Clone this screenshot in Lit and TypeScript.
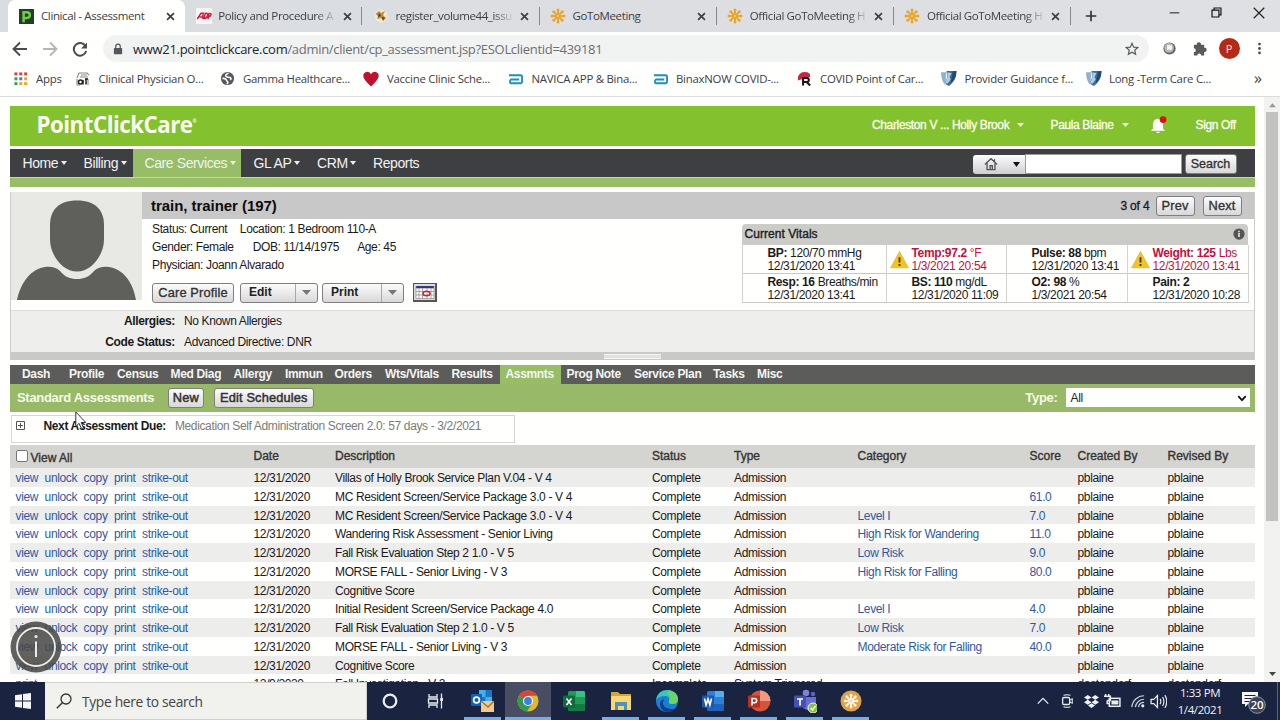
import { LitElement, html, svg, css, nothing } from "lit";
import { customElement } from "lit/decorators.js";

const burst = (fill: string, hub: string) => svg`
  <g stroke=${fill} stroke-width="1.900" fill=${fill}>
    ${[0, 45, 90, 135, 180, 225, 270, 315].map(
      (a) => svg`<g transform="rotate(${a} 8 8)"><path d="M8 8V2.6"/><circle cx="8" cy="2" r="1.500" stroke="none"/></g>`,
    )}
    <circle cx="8" cy="8" r="2.400" stroke="none"/><circle cx="8" cy="8" r=".8" fill=${hub} stroke="none"/>
  </g>`;

const icon = (body: unknown, w = 16, h = w, box = "0 0 16 16") =>
  html`<svg width=${w} height=${h} viewBox=${box} fill="none">${body}</svg>`;

const pcc = icon(svg`<rect width="16" height="16" fill="#263a30"/><path d="M4.9 14V3.4h3.6a3 3 0 0 1 0 6.1H5" stroke="#6bd13a" stroke-width="2.7"/>`, 15);
const adp = icon(svg`<rect width="16" height="16" rx="1" fill="#f8f4f5"/><path d="M1.300 11 5 5.200h2.200l-.6 5.600M3.600 9h3M8 10.800l1.300-5.600h1.200q1.500.3.900 2.800T8 10.600M12 11l1-5.600q2.400-.2 2 1.500t-2.500 1.600" stroke="#c8203c" stroke-width="1.500"/>`, 16);
const seal = icon(svg`<circle cx="8" cy="8" r="6.500" fill="#f4e8c8"/><path d="M2.500 6 6 3l2 2 4-2-2 4 3 3-3 3-2-3-4 1 1-3z" fill="#b98a45"/><path d="m6 5 2 3-3 1zM9 9l3 1-2 2z" fill="#4b3a28"/>`, 16);
const goto = icon(burst("#e7a52b", "#fff1cf"), 16);
const abbott = icon(svg`<path d="M1 4h12.500q1.500 0 1.500 1.500v5.500q0 1.500-1.500 1.500h-10Q2 12.500 2 10.800T3.500 8.500H12" stroke="#1f8fb4" stroke-width="2"/>`, 15, 16);
const shield = icon(svg`<path d="M1 2h5l-1 12Q1 10 1 2z" fill="#8fb0cf"/><path d="M6 1h9.500q0 9-7 14-3.500-1-3.500-4 3-4 1-10z" fill="#3f6f9f"/><path d="m7 2 4 1-2 3 1 3-3 4-2-1 2-5z" fill="#b4cce0"/><path d="m12 1.500 3.500-.5q0 4-1.500 7l-4 5 1-6z" fill="#234a72"/>`, 17);
const raven = icon(svg`<path d="M1 6q2-5 7-5 7 0 6 5l-4 2-6 1-3 1z" fill="#c22945"/><path d="M6.500 15.500V7.500h4a2 2 0 0 1 0 4.200H7M10 11.500l4 4" stroke="#1b1718" stroke-width="2.200"/>`, 15);
const heart = icon(svg`<path d="M8 15.500Q.3 8.500.3 5A4 4 0 0 1 8 3.300 4 4 0 0 1 15.700 5Q15.700 8.500 8 15.500z" fill="#bf1230"/>`, 16);
const globe = icon(svg`<circle cx="8" cy="8" r="7" fill="#55585c"/><path d="M9 2.300Q5 4 6.300 5.500T11 7q1.500 1 0 2.500M2.500 8q3-.5 4 1.200T8.500 12l-1 2" stroke="#fff" stroke-width="1.700"/>`, 15);
const doc = icon(svg`<path d="M2 7 4 2h8l2 2M6 4h6M5 6h8M2 8v6h3M13 8v6" stroke="#8a8d90" stroke-width="1.100"/><circle cx="5.500" cy="11" r="2" stroke="#222" stroke-width="1.600"/><path d="M8 9v4.500M11 8.500v5M10 8h3" stroke="#222" stroke-width="1.500"/>`, 16);
const apps = icon(
  [0, 1, 2].flatMap((r) => [0, 1, 2].map((c) => svg`<rect x=${1.5 + c * 5.2} y=${1.5 + r * 5.2} width="3.200" height="3.200" fill=${["#d8433b", "#d8433b", "#d8433b", "#3f9a55", "#3b7fd6", "#e6a52c", "#3f9a55", "#e6a52c", "#e6a52c"][r * 3 + c]}/>`)),
  15,
);
const cross = icon(svg`<path d="m3 3 10 10M13 3 3 13" stroke="#3c4043" stroke-width="2.500"/>`, 11);
const caret = (c: string, w = 7, h = 4) => html`<svg width=${w} height=${h} viewBox="0 0 8 5" preserveAspectRatio="none"><path d="M0 0h8L4 5z" fill=${c}/></svg>`;
const warn = icon(svg`<path d="M8 1.200 15.500 15H.5z" fill="#f3c41f" stroke="#e0b23a" stroke-width=".6" stroke-linejoin="round"/><path d="M8 6v4.500M8 11.800v1.600" stroke="#3a3420" stroke-width="1.500"/>`, 21, 19);

const TABS: [unknown, string][] = [
  [pcc, "Clinical - Assessment"],
  [adp, "Policy and Procedure A"],
  [seal, "register_volume44_issu"],
  [goto, "GoToMeeting"],
  [goto, "Official GoToMeeting H"],
  [goto, "Official GoToMeeting H"],
];

const BOOKMARKS: [unknown, string][] = [
  [apps, "Apps"],
  [doc, "Clinical Physician O..."],
  [globe, "Gamma Healthcare..."],
  [heart, "Vaccine Clinic Sche..."],
  [abbott, "NAVICA APP & Bina..."],
  [abbott, "BinaxNOW COVID-..."],
  [raven, "COVID Point of Car..."],
  [shield, "Provider Guidance f..."],
  [shield, "Long -Term Care C..."],
];

const font = css`
  * { box-sizing: border-box; }
  svg { display: block; flex: none; }
`;

@customElement("browser-chrome")
class BrowserChrome extends LitElement {
  static styles = [font, css`
    :host { display: block; height: 97px; background: #fffffd; color: #3d4043; font-family: "Open Sans", sans-serif; white-space: nowrap; }
    .tabs { display: flex; height: 32px; background: linear-gradient(90deg, #d9dce0, #dfe0e4); padding-left: 8px; align-items: stretch; }
    .tab { width: 177.200px; padding-left: 11px; display: flex; align-items: center; }
    .tab.active { background: #fffffd; border-radius: 7px 7px 0 0; }
    .label { width: 117px; margin: 0 6.500px 0 7px; font-size: 11.500px; letter-spacing: -.38px; line-height: 18px; }
    .fade { -webkit-mask-image: linear-gradient(90deg, #000 84%, rgba(0, 0, 0, .1)); mask-image: linear-gradient(90deg, #000 84%, rgba(0, 0, 0, .1)); }
    .fav { width: 15px; display: flex; justify-content: center; }
    .rule { width: 1px; height: 18px; background: #85888c; margin-left: auto; }
    .plus { margin: 10px 0 0 14px; }
    .win { display: flex; margin-left: auto; gap: 31px; padding: 7px 15px 0 0; }
    .bar { display: flex; height: 33px; align-items: center; padding-left: 12px; }
    .nav { display: flex; gap: 14px; margin-right: 15px; }
    .omni { display: flex; align-items: center; height: 27px; width: 1046px; border-radius: 14px; background: #f1f2f2; padding-left: 9px; font-size: 13px; color: #6c6f73; }
    .omni b { font-weight: 400; color: #222427; }
    .url { margin-left: 9px; letter-spacing: -.3px; }
    .star { margin: 0 10px 0 auto; }
    .tools { display: flex; align-items: center; margin-left: 13.500px; }
    .puz { margin-left: 16px; }
    .me { width: 21px; height: 21px; border-radius: 50%; background: #b32a17; color: #ffe8df; font: 11px/21px "Open Sans", sans-serif; text-align: center; margin: 0 13px 0 12px; }
    .marks { display: grid; grid-template-columns: 62.500px 144.500px 144px 144.500px 144.500px 144px 144.500px 144.500px 145px 1fr; height: 27px; padding-left: 12px; align-items: center; font-size: 11.400px; letter-spacing: -.25px; }
    .mark { display: flex; align-items: center; gap: 8px; }
    .mark .fav { width: 16px; }
    .more { font-size: 16px; padding-left: 24px; line-height: 18px; margin-top: -2px; }
    .edge { height: 1px; background: #dcdcdc; margin-top: 4px; }
  `];
  render() {
    return html`
      <div class="tabs">
        ${TABS.map(([i, t], n) => html`<div class="tab ${n ? "" : "active"}">
          <span class="fav">${i}</span><span class="label ${n && n !== 3 ? "fade" : ""}">${t}</span>${cross}
          ${n ? html`<i class="rule"></i>` : nothing}</div>`)}
        <span class="plus">${icon(svg`<path d="M8 1v14M1 8h14" stroke="#333" stroke-width="2.200"/>`, 12)}</span>
        <div class="win">
          ${icon(svg`<path d="M1 8.500h14" stroke="#222" stroke-width="1.500"/>`, 11)}
          ${icon(svg`<path d="M1.500 4.500h10v10h-10zM4.500 4.500v-3h10v10h-3" stroke="#111" stroke-width="1.700"/>`, 11)}
          ${icon(svg`<path d="m1 1 14 14M15 1 1 15" stroke="#222" stroke-width="1.600"/>`, 12)}
        </div>
      </div>
      <div class="bar">
        <div class="nav">
          ${icon(svg`<path d="M15 8H2M8 1.500 1.500 8 8 14.500" stroke="#4a4d50" stroke-width="1.900"/>`, 16)}
          ${icon(svg`<path d="M1 8h13M8 1.500 14.500 8 8 14.500" stroke="#b4b5b7" stroke-width="1.900"/>`, 16)}
          ${icon(svg`<path d="M13.500 5A6.300 6.300 0 1 0 14.200 10" stroke="#4a4d50" stroke-width="2"/><path d="M15 1.500v6H9z" fill="#4a4d50"/>`, 16)}
        </div>
        <div class="omni">
          ${icon(svg`<rect x="2.500" y="6.500" width="11" height="8.500" rx="1" fill="#54575a"/><path d="M5 7V4.500a3 3 0 0 1 6 0V7" stroke="#54575a" stroke-width="1.600"/>`, 12)}
          <span class="url"><b>www21.pointclickcare.com</b>/admin/client/cp_assessment.jsp?ESOLclientid=439181</span>
          <span class="star">${icon(svg`<path d="m8 1.500 1.900 4.400 4.800.4-3.600 3.100 1.100 4.700L8 11.600l-4.200 2.500 1.100-4.700L1.300 6.300l4.800-.4z" stroke="#55585b" stroke-width="1.300"/>`, 14)}</span>
        </div>
        <div class="tools">
          ${icon(svg`<circle cx="8" cy="8" r="7.500" fill="#5c5e60"/><circle cx="7.500" cy="7.300" r="6" fill="#b6b9bb"/><path d="M5 4h6v5.500H5z" fill="#f6f6f6"/>`, 13)}
          <svg class="puz" width="15" height="15" viewBox="0 0 16 16"><path d="M2 4h3.200a2.200 2.200 0 1 1 4.300 0H13v3.300a2.200 2.200 0 1 1 0 4.300V15.500H9.800a2 2 0 1 0-4.200 0H2V12a2 2 0 1 0 0-4.200z" fill="#585b5e"/></svg>
          <div class="me">P</div>
          ${icon(svg`<g fill="#4a4d50"><circle cx="8" cy="2.500" r="1.700"/><circle cx="8" cy="8" r="1.700"/><circle cx="8" cy="13.500" r="1.700"/></g>`, 13)}
        </div>
      </div>
      <div class="marks">
        ${BOOKMARKS.map(([i, t]) => html`<div class="mark"><span class="fav">${i}</span>${t}</div>`)}
        <span class="more">»</span>
      </div>
      <div class="edge"></div>`;
  }
}

const ROWS: [string, string, string][] = [
  ["Villas of Holly Brook Service Plan V.04 - V 4", "", ""],
  ["MC Resident Screen/Service Package 3.0 - V 4", "", "61.0"],
  ["MC Resident Screen/Service Package 3.0 - V 4", "Level I", "7.0"],
  ["Wandering Risk Assessment - Senior Living", "High Risk for Wandering", "11.0"],
  ["Fall Risk Evaluation Step 2 1.0 - V 5", "Low Risk", "9.0"],
  ["MORSE FALL - Senior Living - V 3", "High Risk for Falling", "80.0"],
  ["Cognitive Score", "", ""],
  ["Initial Resident Screen/Service Package 4.0", "Level I", "4.0"],
  ["Fall Risk Evaluation Step 2 1.0 - V 5", "Low Risk", "7.0"],
  ["MORSE FALL - Senior Living - V 3", "Moderate Risk for Falling", "40.0"],
  ["Cognitive Score", "", ""],
];

const VITALS: [string, string, string, string, boolean][] = [
  ["BP:", "", " 120/70 mmHg", "12/31/2020 13:41", false],
  ["Temp:", "97.2", " °F", "1/3/2021 20:54", true],
  ["Pulse: ", "88", " bpm", "12/31/2020 13:41", false],
  ["Weight: ", "125", " Lbs", "12/31/2020 13:41", true],
  ["Resp: ", "16", " Breaths/min", "12/31/2020 13:41", false],
  ["BS: ", "110", " mg/dL", "12/31/2020 11:09", false],
  ["O2: ", "98", " %", "1/3/2021 20:54", false],
  ["Pain: ", "2", "", "12/31/2020 10:28", false],
];

@customElement("clinical-page")
class ClinicalPage extends LitElement {
  static styles = [font, css`
    :host { display: flex; height: 585px; overflow: hidden; background: #fffffd; color: #1a1a1a; font: 12px "Liberation Sans", Arial, sans-serif; letter-spacing: -.36px; white-space: nowrap; position: relative; }
    .page { width: 1245px; margin: 9px 9.500px 0 9.500px; flex: none; }
    .brand { height: 40px; background: #84c12f; display: grid; grid-template-columns: 27px 835.500px 178.500px 98px 47px 1fr; align-items: center; color: #fbfff0; padding-bottom: 3px; -webkit-text-stroke: .3px; }
    .logo { font: 700 22.300px/30px "Open Sans", sans-serif; letter-spacing: -.5px; -webkit-text-stroke: 0; }
    .logo sup { font-size: 5px; line-height: 0; vertical-align: 10px; letter-spacing: 0; }
    .who { display: flex; align-items: center; gap: 8px; }
    .menu { margin-top: 3px; height: 28px; background: #3e3f42; display: flex; color: #f2f2f0; font-size: 14px; }
    .menus { display: grid; grid-template-columns: 61px 62px 108px 76.500px 56px 90px; line-height: 28px; letter-spacing: -.4px; }
    .menus span { display: flex; align-items: center; gap: 2.500px; }
    .menus .m { padding-left: 13px; }
    .menus .on { background: #97be67; padding-left: 12px; }
    .find { margin-left: auto; display: flex; align-items: center; padding-right: 18px; padding-top: 2px; }
    .scope { width: 52px; height: 19px; border-radius: 3px 0 0 3px; background: linear-gradient(#fcfcfc, #cfcfd2); display: flex; align-items: center; gap: 15px; padding-left: 11px; }
    .q { width: 157px; height: 20px; background: #fff; border: 1px solid #9a9a98; margin-right: 3px; }
    .btn { border: 1px solid #7e7f7e; border-radius: 3px; background: linear-gradient(#fcfcfc, #d7d8d7); color: #333; display: flex; align-items: center; justify-content: center; height: 20px; font-size: 12.800px; letter-spacing: .15px; -webkit-text-stroke: .35px; flex: none; }
    .search { width: 52px; font-size: 12.500px; letter-spacing: 0; }
    .prev { width: 39px; } .next { width: 39px; margin-left: 8px; }
    .profile { width: 82px; }
    .band { height: 10px; background: #97be67; border-top: 1px solid #c6d7b4; }
    .card { margin-top: 5px; border: 1px solid #cdcecb; border-top: 0; height: 168px; margin-left: .5px; }
    .top { display: grid; grid-template-columns: 130.500px 1fr; height: 118px; }
    .avatar { height: 108px; background: #e8e9e5; }
    .strip { height: 27px; background: #c9c8c8; display: flex; align-items: center; padding: 0 12px 0 9.500px; }
    .name { font: 700 15px "Liberation Sans", sans-serif; letter-spacing: -.05px; color: #0c0c0c; }
    .count { margin: 0 6px 0 auto; -webkit-text-stroke: .3px; letter-spacing: -.15px; }
    .body { display: flex; justify-content: space-between; padding: 0 6px 0 10.500px; }
    .facts { padding-top: 2px; line-height: 17.800px; }
    .facts div { display: flex; }
    .loc { margin-left: 12.500px; } .dob { margin-left: 19px; } .age { margin-left: 18px; }
    .facts .acts { padding-top: 8.500px; }
    .facts .split { justify-content: flex-start; align-items: center; padding-left: 8px; color: #222; font-weight: 700; font-size: 12px; letter-spacing: 0; -webkit-text-stroke: 0; }
    .split i { margin-left: auto; width: 22px; height: 18px; border-left: 1px solid #a8a8a8; display: grid; place-items: center; }
    .edit { width: 78px; margin-left: 6px; } .print { width: 82px; margin: 0 8.500px 0 4px; }
    .vit { width: 506px; height: 78px; margin-top: 5px; }
    .vh { height: 21px; background: #cbccc8; border-radius: 4px 4px 0 0; display: flex; align-items: center; justify-content: space-between; padding: 0 3px 2px; -webkit-text-stroke: .35px; letter-spacing: .05px; }
    .vg { display: grid; grid-template-columns: 144px 120px 121px 121px; grid-template-rows: 29px 29px; border-left: 1px solid #d3d4d0; }
    .cell { border-right: 1px solid #d3d4d0; border-bottom: 1px solid #c8c9c5; padding-left: 25px; display: flex; line-height: 13px; padding-top: 2px; }
    .cell svg { margin: 3px 2px 0 -23px; }
    .red { color: #c0123f; }
    .alg { background: #eeeeec; height: 42px; border-top: 1px solid #dcddda; display: grid; grid-template-columns: 164px 1fr; column-gap: 9px; line-height: 20.500px; }
    .alg b { text-align: right; }
    .grip { height: 8px; background: #c9c9c7; display: flex; justify-content: center; align-items: center; }
    .grip i { width: 57px; height: 5px; background: #e2e2e0; border-block: 1px solid #f5f5f3; }
    .tabs { margin-top: 5px; height: 18.500px; background: #5c5c5a; color: #f5f5f2; font-weight: 700; letter-spacing: -.33px; line-height: 19px; display: grid; grid-template-columns: 12.500px 47px 48px 53.500px 63px 51.500px 49.500px 50.500px 66.500px 48px 61px 73.500px 79px 44px 1fr; }
    .tabs .on { background: #97be67; padding-left: 6px; }
    .tabs .in { padding-left: 6px; }
    .sub { height: 28.500px; background: #98ba68; display: flex; align-items: center; color: #f6fbe9; padding: 0 5px 0 7.500px; font-weight: 700; font-size: 13px; letter-spacing: -.3px; }
    .sub .btn { font-weight: 400; -webkit-text-stroke: .5px; }
    .new { width: 36px; margin: 0 10px 0 13.500px; } .sched { width: 100px; }
    .sel { width: 184px; height: 19px; background: #fffffd; color: #222; font-weight: 400; font-size: 12px; display: flex; align-items: center; justify-content: space-between; padding: 0 3px 0 5px; margin-left: 8px; }
    .type { margin-left: auto; }
    .due { width: 504px; height: 28px; margin: 2.500px 0 0 1.500px; border: 1px solid #d5d6d2; display: flex; padding: 5px 0 0 4px; line-height: 11px; }
    .due b { margin: 0 9px 0 18.500px; }
    .due span { color: #7b7b79; }
    .grid { display: grid; grid-template-columns: 6px 238px 81.500px 317px 82px 123.500px 172px 48px 90px 1fr; height: 18.750px; line-height: 20px; }
    .grid:nth-child(even) { background: #ededeb; }
    .grid.head { height: 23px; margin-top: 2.500px; background: #d4d4d0; line-height: 22px; color: #333; -webkit-text-stroke: .35px; letter-spacing: 0; }
    .all { display: flex; align-items: center; gap: 3px; padding-top: 2px; }
    .chk { width: 12px; height: 12px; border: 1px solid #777; border-radius: 2px; background: #fff; margin-top: -4px; }
    .links { display: flex; gap: 6.500px; }
    .links, .a { color: #2f5aa0; }
    .scroll { width: 16px; background: #f2f2f0; display: flex; flex-direction: column; align-items: center; }
    .scroll .thumb { width: 12px; height: 409px; background: #c2c2c0; margin: 2px 0 auto; }
    .up { margin-top: 4px; } .dn { margin-bottom: 6px; }
    .info { position: absolute; left: 9.500px; top: 524px; }
    .cursor { position: absolute; left: 75px; top: 314px; }
  `];
  render() {
    const acts = ["view", "unlock", "copy", "print", "strike-out"];
    return html`
      <div class="page">
        <div class="brand"><i></i><span class="logo">PointClickCare<sup>®</sup></span>
          <span class="who">Charleston V ... Holly Brook ${caret("#eef8d8")}</span>
          <span class="who">Paula Blaine ${caret("#eef8d8")}</span>
          ${icon(svg`<path d="M8 2.500q4.500.5 4.500 5v4l2 1.700h-13l2-1.700v-4q0-4.500 4.500-5zM6 14h4q-2 2.500-4 0z" fill="#fff"/><circle cx="12.500" cy="3.200" r="3" fill="#d8130c"/>`, 18)}
          <span>Sign Off</span></div>
        <div class="menu"><div class="menus">
          <span class="m">Home ${caret("#eee", 6)}</span><span class="m">Billing ${caret("#eee", 6)}</span>
          <span class="on">Care Services ${caret("#eee", 6)}</span><span class="m">GL AP ${caret("#eee", 6)}</span>
          <span>CRM ${caret("#eee", 6)}</span><span>Reports</span></div>
          <div class="find"><div class="scope">${icon(svg`<path d="M1 8.500 8 2l7 6.500M3.500 7v7.500h9V7M7 14.500V10h2.500v4.500M12 2.500V5" stroke="#555" stroke-width="1.500"/>`, 14)}${caret("#111", 7, 5)}</div>
          <div class="q"></div><div class="btn search">Search</div></div></div>
        <div class="band"></div>
        <div class="card">
          <div class="top">
            <svg class="avatar" width="130.500" height="108" viewBox="0 0 130.500 108"><path d="M66 8.500c19 0 27 10 27 25v14c0 15-12 32-27 32S39 62.500 39 47.500v-14c0-15 8-25 27-25z" fill="#5f5f5b"/><path d="M6 108c4-18 14-31 28-33 6-.5 11 0 15 4 5 6 10 8 17 8s12-2 17-8c4-4 9-4.500 15-4 14 2 24 15 27 33z" fill="#5f5f5b"/></svg>
            <div><div class="strip"><span class="name">train, trainer (197)</span><span class="count">3 of 4</span><div class="btn prev">Prev</div><div class="btn next">Next</div></div>
              <div class="body"><div class="facts">
                <div><span>Status: Current</span><span class="loc">Location: 1 Bedroom 110-A</span></div>
                <div><span>Gender: Female</span><span class="dob">DOB: 11/14/1975</span><span class="age">Age: 45</span></div>
                <div>Physician: Joann Alvarado</div>
                <div class="acts"><div class="btn profile">Care Profile</div><div class="btn split edit">Edit<i>${caret("#777", 9, 5)}</i></div><div class="btn split print">Print<i>${caret("#777", 9, 5)}</i></div>
                  <svg width="24" height="19" viewBox="0 0 24 19"><rect width="24" height="19" fill="#555"/><rect x="1" y="1" width="21" height="16" fill="#dcdcda"/><rect x="3" y="3" width="18" height="2.500" fill="#2d3c80"/><rect x="3" y="5.500" width="18" height="10" fill="#fff"/><path d="M3 8.500h18M3 12h18M6 5v10.500M9.500 5v10.500M14 5v10.500M18 5v10.500M3 3v12.500h18V3" stroke="#888" stroke-width=".7" fill="none"/><ellipse cx="13.500" cy="10.500" rx="3.500" ry="2.300" fill="none" stroke="#c3242f" stroke-width="1.500"/></svg></div>
              </div>
              <div class="vit"><div class="vh">Current Vitals${icon(svg`<circle cx="8" cy="8" r="7.500" fill="#555"/><path d="M8 6.800v5.200M8 3.500v2" stroke="#eee" stroke-width="2"/>`, 12)}</div>
                <div class="vg">${VITALS.map(([l, v, u, d, w]) => html`<div class="cell ${w ? "red" : ""}">${w ? warn : nothing}<div><b>${l}${v}</b>${u}<br>${d}</div></div>`)}</div></div>
              </div></div>
          </div>
          <div class="alg"><b>Allergies:</b><span>No Known Allergies</span><b>Code Status:</b><span>Advanced Directive: DNR</span></div>
          <div class="grip"><i></i></div>
        </div>
        <div class="tabs"><i></i>${["Dash", "Profile", "Census", "Med Diag", "Allergy", "Immun", "Orders", "Wts/Vitals", "Results", "Assmnts", "Prog Note", "Service Plan", "Tasks", "Misc"].map((t) => html`<span class=${t === "Assmnts" ? "on" : t === "Prog Note" ? "in" : ""}>${t}</span>`)}</div>
        <div class="sub">Standard Assessments<div class="btn new">New</div><div class="btn sched">Edit Schedules</div><span class="type">Type:</span>
          <div class="sel">All${icon(svg`<path d="m2 5 6 6.500L14 5" stroke="#111" stroke-width="2.800"/>`, 10)}</div></div>
        <div class="due"><svg width="9" height="9" viewBox="0 0 9 9"><path d="M.5.5h8v8h-8zM2 4.500h5M4.500 2v5" stroke="#555" fill="none"/></svg><b>Next Assessment Due:</b><span>Medication Self Administration Screen 2.0: 57 days - 3/2/2021</span></div>
        <div>
          <div class="grid head"><i></i><span class="all"><i class="chk"></i>View All</span><span>Date</span><span>Description</span><span>Status</span><span>Type</span><span>Category</span><span>Score</span><span>Created By</span><span>Revised By</span></div>
          ${ROWS.map(([d, c, s]) => html`<div class="grid"><i></i><span class="links">${acts.map((a) => html`<span>${a}</span>`)}</span><span>12/31/2020</span><span>${d}</span><span>Complete</span><span>Admission</span><span class="a">${c}</span><span class="a">${s}</span><span>pblaine</span><span>pblaine</span></div>`)}
          <div class="grid"><i></i><span class="links"><span>print</span></span><span>12/9/2020</span><span>Fall Investigation - V 2</span><span>Incomplete</span><span>System Triggered</span><span></span><span></span><span>dostendorf</span><span>dostendorf</span></div>
        </div>
      </div>
      <div class="scroll"><span class="up">${icon(svg`<path d="M2 11 8 4l6 7z" fill="#999"/>`, 9)}</span><i class="thumb"></i><span class="dn">${caret("#444", 7, 4)}</span></div>
      <svg class="info" width="52" height="52" viewBox="0 0 52 52"><circle cx="26" cy="26" r="25.500" fill="#474745" fill-opacity=".86"/><circle cx="26" cy="26" r="19" fill="none" stroke="#ecece8" stroke-width="1.800"/><path d="M26 20.500V36" stroke="#ecece8" stroke-width="2"/><circle cx="26" cy="15.500" r="1.600" fill="#ecece8"/></svg>
      <svg class="cursor" width="13" height="20" viewBox="0 0 13 20"><path d="M.8 1v14.500l3.300-3.200 2.400 5.500 2-.9-2.300-5.400h4.600z" fill="#fff" stroke="#333" stroke-width="1"/></svg>`;
  }
}

const letterTile = (dark: string, mid: string, light: string, d: string) => svg`
  <rect x="6" y="2" width="17" height="20" rx="1.500" fill=${mid}/><path d="M14 2h7.500q1.500 0 1.500 1.500V8h-9z" fill=${light}/><rect x="6" y="15" width="17" height="7" rx="1.500" fill=${dark} opacity=".7"/>
  <rect x="1" y="6.500" width="12" height="12" rx="1" fill=${dark}/><path d=${d} stroke="#fff" stroke-width="1.600"/>`;
const task = (b: unknown) => icon(b, 24, 24, "0 0 24 24");
const APPS: [unknown, string][] = [
  [task(svg`<circle cx="12" cy="12" r="6.300" stroke="#e8ecf2" stroke-width="2.300"/>`), ""],
  [task(svg`<path d="M5 5v3h8V5M5 19v-3h8v3M4.500 10h9v4h-9zM17.500 4.500v15" stroke="#e8ecf2" stroke-width="1.300"/><rect x="16.200" y="9" width="2.800" height="3" fill="#e8ecf2"/>`), ""],
  [task(svg`<rect x="9" y="1" width="13" height="14" fill="#1d74c4"/><path d="M9 1h6.500v7H9zM15.500 8H22v7h-6.500z" fill="#45b1ec"/><rect x="1" y="5" width="11" height="12" rx="1" fill="#0f62b5"/><circle cx="6.500" cy="11" r="2.900" stroke="#fff" stroke-width="1.700"/><path d="M11 12h14v11H11z" fill="#f0cb91"/><path d="m11 12 7 6 6-6" stroke="#a66f2f" stroke-width="1.300"/>`), "run"],
  [task(svg`<circle cx="12" cy="12" r="10.500" fill="#e2b92c"/><path d="M12 12 2.900 6.700A10.500 10.500 0 0 1 21.100 6.700H12z" fill="#d9433a"/><path d="M2.900 6.700A10.500 10.500 0 0 0 11 22.450L16 14.500 12 12z" fill="#35994f"/><circle cx="12" cy="12" r="5" fill="#fff"/><circle cx="12" cy="12" r="3.900" fill="#3f7fe0"/>`), "run hot"],
  [task(letterTile("#0f6b39", "#1f9a57", "#35c481", "m4.500 9.500 5 6.500M9.500 9.500l-5 6.500")), ""],
  [task(svg`<path d="M2 3h7l2 2h11v5H2z" fill="#d9a436"/><path d="M2 7h20v14H2z" fill="#f8d675"/><path d="M6 21v-8h12v8h-3v-4H9v4z" fill="#4e93b8"/>`), "run"],
  [task(svg`<circle cx="12" cy="12" r="11" fill="#1a7fcf"/><path d="M1 11Q3 1 12 1t11 9q0 5-6 5-4 0-3-3 1-5-4-5-6 0-9 4z" fill="#3cc5ba"/><path d="M14 1.200q9 1.500 9 9 0 5-6 4.800-4 0-3-3 3-5-2-8z" fill="#69d26d"/><path d="M9 10q-4 9 8 10 3 0 4-1.500-3 5-9 4.500Q6 22 5 16q0-5 4-6z" fill="#123f8c"/>`), "run"],
  [task(letterTile("#1b57b0", "#2f7fd6", "#53aef2", "m3.500 9.500 1.600 6.500L7 10l1.900 6 1.600-6.500")), "run"],
  [task(svg`<circle cx="13" cy="12" r="10.500" fill="#d5533a"/><path d="M13 1.500A10.500 10.500 0 0 1 23.500 12H13z" fill="#f19a80"/><rect x="1" y="6.500" width="12" height="12" rx="1" fill="#b5301f"/><path d="M5 16.500V9.500h2.600a2 2 0 0 1 0 4.200H5" stroke="#fff" stroke-width="1.600"/>`), "run"],
  [task(svg`<circle cx="13" cy="4" r="3.300" fill="#7b83dd"/><circle cx="20" cy="5" r="2.300" fill="#5b62c4"/><path d="M9 8h14v8q-1 5-7 5-5 0-7-4z" fill="#6a70d0"/><rect x="1" y="6.500" width="12" height="12" rx="1" fill="#464eb8"/><path d="M4 10h6M7 10v6.500" stroke="#fff" stroke-width="1.700"/><circle cx="20" cy="19" r="5" fill="#84c43c" stroke="#eef6e0"/><path d="m17.500 19 2 2 3-4" stroke="#fff" stroke-width="1.400"/>`), "run"],
  [task(svg`<circle cx="12" cy="12" r="10.500" fill="#e2a04b"/><g transform="translate(4.200 4.200) scale(.98)">${burst("#fff6e2", "#e2a04b")}</g>`), "run"],
];

@customElement("task-bar")
class TaskBar extends LitElement {
  static styles = [font, css`
    :host { display: flex; height: 38px; background: #1a2340; color: #f0f2f5; font-family: "Open Sans", sans-serif; white-space: nowrap; }
    .start { width: 45px; display: grid; place-items: center; }
    .search { width: 322px; background: #f1f1ee; border: 1px solid #d0d0cd; border-left: 0; color: #444; font-size: 13.800px; letter-spacing: -.33px; display: flex; align-items: center; gap: 10px; padding-left: 11px; }
    .apps { display: flex; }
    .app { width: 46.100px; display: flex; justify-content: center; align-items: center; background: linear-gradient(#6cb0ee, #6cb0ee) no-repeat center bottom / 0 3px; }
    .run { background-size: 37px 3px; }
    .hot { background-color: #484d63; background-size: 46px 3px; }
    .tray { margin-left: auto; display: flex; align-items: center; gap: 5px; }
    .clock { width: 56px; text-align: center; font-size: 11.500px; line-height: 17px; letter-spacing: -.4px; padding-bottom: 1px; }
    .note { width: 49px; margin: 0 -5px; display: grid; place-items: center; }
    .peek { width: 3px; height: 38px; border-left: 1px solid #5f667c; }
  `];
  render() {
    return html`
      <div class="start">${icon(svg`<path d="M0 2.200 7 1.200v6.300H0zM8 1l8-1v7.500H8zM0 8.500h7v6.300l-7-1zM8 8.500h8V16l-8-1z" fill="#f4f6fa"/>`, 16)}</div>
      <div class="search">${icon(svg`<circle cx="10" cy="6" r="5" stroke="#333" stroke-width="1.300"/><path d="M6.300 9.700.8 15.200" stroke="#333" stroke-width="1.400"/>`, 16)}Type here to search</div>
      <div class="apps">${APPS.map(([i, c]) => html`<div class="app ${c}">${i}</div>`)}</div>
      <div class="tray">
        ${icon(svg`<path d="m2 11 6-6 6 6" stroke="#e9ecf1" stroke-width="1.500"/>`, 14)}
        <span></span>
        ${icon(svg`<rect x="3" y="4" width="8" height="8" rx="1.500" stroke="#e9ecf1" stroke-width="1.500"/><path d="m11 7 3-1.500v5L11 9M4 1.500q4-1.500 8 0M4 14.500q4 1.500 8 0" stroke="#e9ecf1" stroke-width="1.200"/>`, 14)}
        <span></span>
        ${icon(svg`<path d="M4 1 0 3.600l4 2.600 4-2.600zM12 1 8 3.600l4 2.600 4-2.600zM4 6.200 0 8.800l4 2.600 4-2.600zM12 6.200 8 8.800l4 2.600 4-2.600zM8 9.800l-3.800 2.500L8 14.800l3.800-2.500z" fill="#f0f2f5"/>`, 15)}
        ${icon(svg`<rect x="5" y="5" width="10" height="7.500" stroke="#e9ecf1" stroke-width="1.400"/><rect x="7" y="7" width="6.500" height="3.800" fill="#e9ecf1"/><path d="M0 3h6v4H3M1.500 1v2M4.500 1v2M3 7v3h2" stroke="#e9ecf1" stroke-width="1.400"/>`, 17)}
        <span></span>
        ${icon(svg`<path d="M1 15A14 14 0 0 1 15 2M5 15A10 10 0 0 1 15 6M8.500 15A6.500 6.500 0 0 1 15 9.500" stroke="#c9ced8" stroke-width="1.400"/><circle cx="13.500" cy="13.500" r="1.800" fill="#e9ecf1"/>`, 14)}
        ${icon(svg`<path d="M1 6h2.500L7 2.500v11L3.500 10H1z" stroke="#e9ecf1" stroke-width="1.200"/><path d="M9.500 5.500q1.500 2.500 0 5M11.800 3.800q2.700 4.200 0 8.400M14 2q3.500 6 0 12" stroke="#e9ecf1" stroke-width="1.100"/>`, 17)}
        <div class="clock">1:33 PM<br>1/4/2021</div>
        <div class="note"><svg width="28" height="26" viewBox="0 0 28 26"><path d="M3 4h16v12H9l-3 3v-3H3z" fill="#f4f6f8"/><path d="M5.500 7.500h11M5.500 10.500h11M5.500 13.500h6" stroke="#1a2340" stroke-width="1"/><circle cx="18" cy="17" r="8.300" fill="#3b4358" stroke="#8b91a0"/><text x="18" y="21.200" text-anchor="middle" font-family="Open Sans" font-size="11.500" font-weight="600" fill="#fff">20</text></svg></div>
        <i class="peek"></i>
      </div>`;
  }
}

@customElement("app-root")
class AppRoot extends LitElement {
  static styles = css`:host { display: block; width: 1280px; height: 720px; overflow: hidden; }`;
  render() {
    return html`<browser-chrome></browser-chrome><clinical-page></clinical-page><task-bar></task-bar>`;
  }
}
